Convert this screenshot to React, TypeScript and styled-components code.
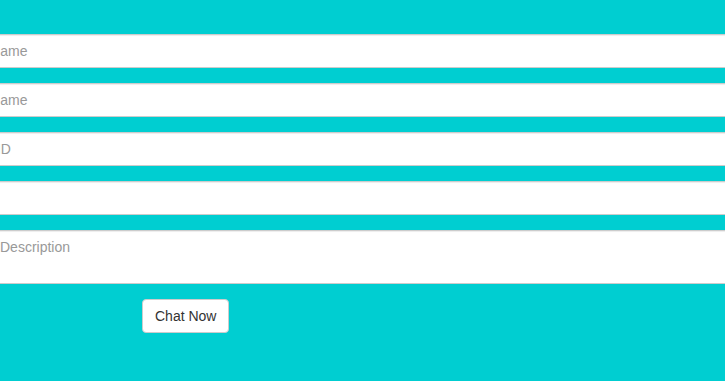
import styled, { createGlobalStyle } from "styled-components";

const GlobalStyle = createGlobalStyle`
  html, body {
    margin: 0;
    padding: 0;
    background: #00ced1;
    overflow: hidden;
  }

  body {
    font-family: "Liberation Sans", Arial, sans-serif;
    font-size: 14px;
    color: #333;
  }
`;

export default function App(): JSX.Element {
  return (
    <>
      <GlobalStyle />
      <StyledPage>
        <StyledForm onSubmit={(e) => e.preventDefault()}>
          <StyledField type="text" placeholder="Your Name" />
          <StyledField type="text" placeholder="Your Name" />
          <StyledField type="text" placeholder="Email ID" />
          <StyledField type="text" placeholder="Phone" />
          <StyledTextArea rows={2} placeholder="Query Description" />
          <StyledActions>
            <StyledButton type="submit">Chat Now</StyledButton>
          </StyledActions>
        </StyledForm>
      </StyledPage>
    </>
  );
}

const StyledPage = styled.div`
  min-height: 381px;
  padding-top: 34px;
  overflow: hidden;
  box-sizing: border-box;
`;

const StyledForm = styled.form`
  display: flex;
  flex-direction: column;
  gap: 15px;
  margin-left: -55px;
  width: 900px;
`;

const fieldBase = `
  display: block;
  width: 100%;
  box-sizing: border-box;
  padding: 6px 12px;
  font-family: "Liberation Sans", Arial, sans-serif;
  font-size: 14px;
  line-height: 20px;
  color: #555;
  background: #fff;
  border: 1px solid #ccc;
  border-radius: 4px;
  box-shadow: inset 0 1px 1px rgba(0, 0, 0, 0.075);
  outline: none;

  &::placeholder {
    color: #999;
  }
`;

const StyledField = styled.input`
  ${fieldBase}
  height: 34px;
`;

const StyledTextArea = styled.textarea`
  ${fieldBase}
  height: 54px;
  resize: none;
`;

const StyledActions = styled.div`
  display: flex;
  padding-left: 197px;
`;

const StyledButton = styled.button`
  height: 34px;
  padding: 6px 12px;
  font-family: "Liberation Sans", Arial, sans-serif;
  font-size: 14px;
  line-height: 20px;
  color: #333;
  background: #fff;
  border: 1px solid #ccc;
  border-radius: 4px;
  cursor: pointer;
`;
